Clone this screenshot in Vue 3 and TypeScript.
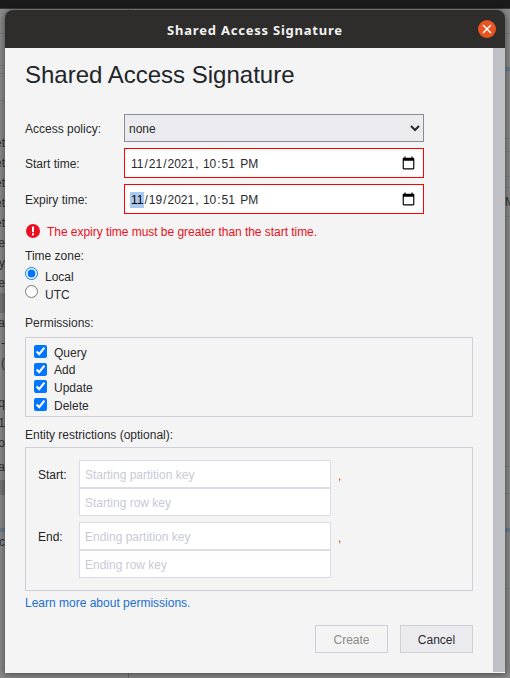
<script setup lang="ts">
interface Strip {
  h: number
  text?: string
  kind?: 'line' | 'band' | 'blue'
}

const leftStrips: Strip[] = [
  { h: 25, kind: 'line' }, { h: 32, kind: 'line' }, { h: 8, kind: 'line' }, { h: 27, kind: 'line' },
  { h: 32 },
  { h: 20, text: 'et' }, { h: 20, text: 'et' }, { h: 20, text: 'et' }, { h: 20, text: 'et' }, { h: 20, text: 'et' },
  { h: 20, text: 'e' }, { h: 20, text: 'y' }, { h: 20, text: 'e' },
  { h: 20, kind: 'band' },
  { h: 20, text: 'a' }, { h: 20, text: '-' }, { h: 20, text: '(' }, { h: 20 },
  { h: 20, text: 'q' }, { h: 20, text: '1' }, { h: 20, text: 'o' }, { h: 27, text: '0a' },
  { h: 15, kind: 'band' },
  { h: 33 },
  { h: 4, kind: 'blue' },
  { h: 20, text: 'c' },
]

const rightStrips: Strip[] = [
  { h: 25, kind: 'line' }, { h: 33 }, { h: 4, kind: 'blue' }, { h: 68, kind: 'line' },
  { h: 13, kind: 'line' }, { h: 25, kind: 'line' }, { h: 11, kind: 'line' },
  { h: 29, text: 'M', kind: 'line' },
  { h: 250, kind: 'line' }, { h: 27, kind: 'line' }, { h: 34 },
  { h: 4, kind: 'blue' }, { h: 57, kind: 'line' },
]

const permissions = ['Query', 'Add', 'Update', 'Delete']
</script>

<template>
  <div class="screen">
    <div class="topbar"></div>
    <div class="backdrop">
      <div class="edge edge-left">
        <div
          v-for="(s, i) in leftStrips"
          :key="i"
          class="strip"
          :class="s.kind"
          :style="{ height: s.h + 'px' }"
        >{{ s.text }}</div>
      </div>
      <div class="middle"><span class="divider"></span></div>
      <div class="edge edge-right">
        <div
          v-for="(s, i) in rightStrips"
          :key="i"
          class="strip"
          :class="s.kind"
          :style="{ height: s.h + 'px' }"
        >{{ s.text }}</div>
      </div>
    </div>

    <div class="window">
      <header class="titlebar">
        <span class="window-title">Shared Access Signature</span>
        <span class="close">
          <svg width="10" height="10" viewBox="0 0 10 10">
            <path d="M1 1 9 9M9 1 1 9" stroke="#fff" stroke-width="1.5" fill="none" />
          </svg>
        </span>
      </header>
      <div class="body">
        <main class="main">
          <h1>Shared Access Signature</h1>

          <div class="field field-select">
            <label>Access policy:</label>
            <select class="policy"><option>none</option></select>
          </div>
          <div class="field">
            <label>Start time:</label>
            <input class="date" type="datetime-local" value="2021-11-21T22:51" />
          </div>
          <div class="field">
            <label>Expiry time:</label>
            <input class="date expiry" type="datetime-local" value="2021-11-19T22:51" />
          </div>

          <div class="error">
            <svg width="14" height="14" viewBox="0 0 14 14">
              <circle cx="7" cy="7" r="7" fill="#e81123" />
              <rect x="6" y="2.6" width="2" height="5.6" fill="#fff" />
              <rect x="6" y="9.3" width="2" height="2" fill="#fff" />
            </svg>
            <span>The expiry time must be greater than the start time.</span>
          </div>

          <div class="label tz-label">Time zone:</div>
          <label class="option radio"><input type="radio" name="tz" checked /><span>Local</span></label>
          <label class="option radio"><input type="radio" name="tz" /><span>UTC</span></label>

          <div class="label perm-label">Permissions:</div>
          <div class="box perm-box">
            <label v-for="p in permissions" :key="p" class="option check">
              <input type="checkbox" checked /><span>{{ p }}</span>
            </label>
          </div>

          <div class="label entity-label">Entity restrictions (optional):</div>
          <div class="box entity-box">
            <div class="entity-group">
              <span class="entity-name">Start:</span>
              <div class="entity-inputs">
                <div class="key-row"><input class="key" placeholder="Starting partition key" /><span class="comma">,</span></div>
                <div class="key-row"><input class="key" placeholder="Starting row key" /></div>
              </div>
            </div>
            <div class="entity-group">
              <span class="entity-name">End:</span>
              <div class="entity-inputs">
                <div class="key-row"><input class="key" placeholder="Ending partition key" /><span class="comma">,</span></div>
                <div class="key-row"><input class="key" placeholder="Ending row key" /></div>
              </div>
            </div>
          </div>

          <a class="learn" href="#">Learn more about permissions.</a>

          <div class="actions">
            <button class="btn" disabled>Create</button>
            <button class="btn cancel">Cancel</button>
          </div>
        </main>
        <div class="scrollbar"></div>
      </div>
    </div>
  </div>
</template>

<style>
html, body { margin: 0; overflow: hidden; }
</style>

<style scoped>
.screen {
  position: relative;
  width: 510px;
  height: 678px;
  overflow: hidden;
  background: #8c8c8c;
  font-family: "Liberation Sans", Arial, sans-serif;
  font-size: 12px;
  color: #2a2a2c;
  display: flex;
  flex-direction: column;
}
.topbar { height: 9px; flex: none; background: #1b1a1a; border-bottom: 1px solid #3a3a3a; box-sizing: border-box; }
.backdrop { flex: 1; display: flex; min-height: 0; }
.edge { width: 5px; flex: none; overflow: hidden; display: flex; flex-direction: column; }
.middle { flex: 1; }
.divider { display: block; width: 1px; height: 100%; margin-left: 123px; background: #6e6e6e; }
.strip {
  box-sizing: border-box;
  flex: none;
  display: flex;
  align-items: center;
  justify-content: flex-end;
  white-space: nowrap;
  color: #333;
  line-height: 14px;
}
.edge-right .strip { justify-content: flex-start; }
.strip.line { border-bottom: 1px solid #7d7d85; }
.strip.band { background: #767676; }
.strip.blue { background: #6d7f90; }

.window {
  position: absolute;
  left: 5px;
  top: 10px;
  width: 500px;
  height: 663px;
  display: flex;
  flex-direction: column;
  border-radius: 8px 8px 0 0;
  overflow: hidden;
  box-shadow: 0 1px 7px 1px rgba(0, 0, 0, 0.45);
}
.titlebar {
  height: 38px;
  flex: none;
  position: relative;
  display: flex;
  align-items: center;
  justify-content: center;
  background: #2e2d2c;
}
.window-title {
  font-family: "Noto Sans", sans-serif;
  font-weight: 700;
  font-size: 13px;
  letter-spacing: 0.78px;
  color: #f2f2f2;
  padding: 2px 0 0 0;
}
.close {
  position: absolute;
  right: 9px;
  top: 9.5px;
  width: 18px;
  height: 18px;
  border-radius: 50%;
  background: #e95420;
  display: flex;
  align-items: center;
  justify-content: center;
}
.body { flex: 1; display: flex; min-height: 0; background: #f4f4f4; }
.main { flex: 1; padding: 0 20px; min-width: 0; }
.scrollbar { width: 12px; flex: none; height: 624px; background: #c0c1c6; border-right: 0; }

h1 {
  margin: 12px 0 24px;
  font-size: 24px;
  line-height: 30px;
  font-weight: 400;
  color: #212529;
}
.field { display: flex; align-items: center; margin-bottom: 6px; }
.field label { width: 99px; flex: none; padding-top: 2px; }
.policy {
  width: 300px;
  height: 28px;
  box-sizing: border-box;
  border: 1px solid #8a8a9c;
  border-radius: 0;
  background-color: #ebebef;
  color: #2a2a2c;
  font: 12px "Liberation Sans", Arial, sans-serif;
  padding: 2px 0 0;
}
.date {
  width: 300px;
  height: 30px;
  box-sizing: border-box;
  border: 1px solid #f00;
  border-radius: 0;
  background: #fff;
  color: #2a2a2c;
  font: 12px "Liberation Sans", Arial, sans-serif;
  padding: 2px 5px 0;
  margin: 0;
  outline: none;
}
.date::-webkit-calendar-picker-indicator {
  width: 15px;
  height: 15px;
  padding: 0;
  margin: -2px 2.5px 0 0;
}
.date::-webkit-datetime-edit-ampm-field { margin-left: 1px; }
.expiry::-webkit-datetime-edit-month-field {
  background: #a9c9ee;
  color: #000;
}
.error {
  display: flex;
  align-items: center;
  gap: 7px;
  margin: 10px 0 0 1px;
  height: 14px;
  color: #e81123;
}
.error svg { flex: none; }
.error span { letter-spacing: -0.04px; padding-top: 2px; }
.label { line-height: 14px; }
.tz-label { margin-top: 11px; margin-bottom: 1px; }
.option { display: flex; align-items: center; height: 18px; }
.option input { margin: 0 7px 0 0; flex: none; width: 13px; height: 13px; }
.option span { position: relative; top: 1px; }
.radio { height: 18.5px; }
.radio span { top: 3px; }
.radio:first-of-type span { top: 4px; }
.perm-label { margin-top: 15px; }
.box { box-sizing: border-box; border: 1px solid #cfcfda; }
.perm-box { margin-top: 7px; height: 80px; padding: 5px 8px 0; }
.check { height: 17.6px; }
.entity-label { margin-top: 11px; }
.entity-box { margin-top: 5px; padding: 12px 12px 12px; display: flex; flex-direction: column; gap: 6px; }
.entity-group { display: flex; }
.entity-name { width: 41px; flex: none; line-height: 28px; padding-top: 1px; color: #1f1f1f; }
.entity-inputs { flex: 1; display: flex; flex-direction: column; }
.key-row { display: flex; align-items: center; }
.key {
  width: 252px;
  height: 28px;
  box-sizing: border-box;
  border: 1px solid #dcdce6;
  border-radius: 0;
  background: #fff;
  padding: 2px 5px 0;
  margin: 0;
  font: 12px "Liberation Sans", Arial, sans-serif;
  outline: none;
}
.key::placeholder { color: #c9c9d8; opacity: 1; }
.comma { margin-left: 7px; color: #d4500f; line-height: 14px; position: relative; top: 2px; }
.learn {
  display: block;
  margin-top: 5px;
  line-height: 14px;
  color: #1a6fd0;
  text-decoration: none;
}
.actions { display: flex; justify-content: flex-end; gap: 12px; margin-top: 15px; }
.btn {
  width: 73px;
  height: 28px;
  box-sizing: border-box;
  border: 1px solid #cfcfda;
  border-radius: 0;
  background: transparent;
  font: 12px "Liberation Sans", Arial, sans-serif;
  color: #8a8a8a;
  padding: 2px 0 0;
}
.cancel { background: #ebebef; color: #2a2a30; }
</style>
